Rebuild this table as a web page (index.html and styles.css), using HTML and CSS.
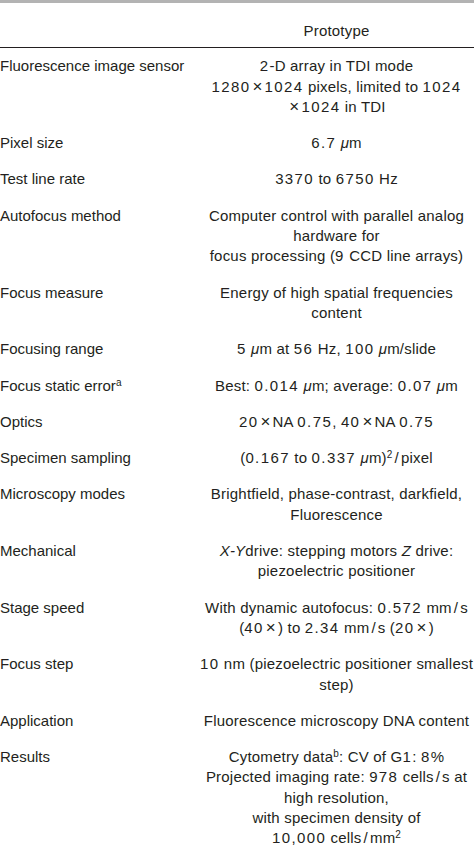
FILE: index.html
```html
<!DOCTYPE html>
<html lang="en">
<head>
<meta charset="utf-8">
<title>Prototype specifications</title>
<link rel="stylesheet" href="styles.css">
</head>
<body>
<div class="spec">
  <div class="row head">
    <div class="label"></div>
    <div class="value">Prototype</div>
  </div>
  <div class="row">
    <div class="label">Fluorescence image sensor</div>
    <div class="value"><span class="n">2</span>-D array in TDI mode<br><span class="n">1280</span><span class="x">×</span><span class="n">1024</span> pixels, limited to <span class="n">1024</span><br><span class="x">×</span><span class="n">1024</span> in TDI</div>
  </div>
  <div class="row">
    <div class="label">Pixel size</div>
    <div class="value"><span class="n">6.7</span> <i>μ</i>m</div>
  </div>
  <div class="row">
    <div class="label">Test line rate</div>
    <div class="value"><span class="n">3370</span> to <span class="n">6750</span> Hz</div>
  </div>
  <div class="row">
    <div class="label">Autofocus method</div>
    <div class="value">Computer control with parallel analog<br>hardware for<br>focus processing (<span class="n">9</span> CCD line arrays)</div>
  </div>
  <div class="row">
    <div class="label">Focus measure</div>
    <div class="value">Energy of high spatial frequencies<br>content</div>
  </div>
  <div class="row">
    <div class="label">Focusing range</div>
    <div class="value"><span class="n">5</span> <i>μ</i>m at <span class="n">56</span> Hz, <span class="n">100</span> <i>μ</i>m/slide</div>
  </div>
  <div class="row">
    <div class="label">Focus static error<sup>a</sup></div>
    <div class="value">Best: <span class="n">0.014</span> <i>μ</i>m; average: <span class="n">0.07</span> <i>μ</i>m</div>
  </div>
  <div class="row">
    <div class="label">Optics</div>
    <div class="value"><span class="n">20</span><span class="x">×</span>NA <span class="n">0.75</span>, <span class="n">40</span><span class="x">×</span>NA <span class="n">0.75</span></div>
  </div>
  <div class="row">
    <div class="label">Specimen sampling</div>
    <div class="value">(<span class="n">0.167</span> to <span class="n">0.337</span> <i>μ</i>m)<sup>2</sup><span class="sl">/</span>pixel</div>
  </div>
  <div class="row">
    <div class="label">Microscopy modes</div>
    <div class="value">Brightfield, phase-contrast, darkfield,<br>Fluorescence</div>
  </div>
  <div class="row">
    <div class="label">Mechanical</div>
    <div class="value"><i>X-Y</i>drive: stepping motors <i>Z</i> drive:<br>piezoelectric positioner</div>
  </div>
  <div class="row">
    <div class="label">Stage speed</div>
    <div class="value">With dynamic autofocus: <span class="n">0.572</span> mm<span class="sl">/</span>s<br>(<span class="n">40</span><span class="x">×</span>) to <span class="n">2.34</span> mm<span class="sl">/</span>s (<span class="n">20</span><span class="x">×</span>)</div>
  </div>
  <div class="row">
    <div class="label">Focus step</div>
    <div class="value"><span class="n">10</span> nm (piezoelectric positioner smallest<br>step)</div>
  </div>
  <div class="row">
    <div class="label">Application</div>
    <div class="value">Fluorescence microscopy DNA content</div>
  </div>
  <div class="row">
    <div class="label">Results</div>
    <div class="value">Cytometry data<sup>b</sup>: CV of G<span class="n">1</span>: <span class="n">8</span>%<br>Projected imaging rate: <span class="n">978</span> cells<span class="sl">/</span>s at<br>high resolution,<br>with specimen density of<br><span class="n">10,000</span> cells<span class="sl">/</span>mm<sup>2</sup></div>
  </div>
</div>
</body>
</html>
```
FILE: styles.css
```css
html, body {
  margin: 0;
  padding: 0;
  background: #ffffff;
  overflow: hidden;
}
body {
  font-family: "Liberation Sans", Arial, sans-serif;
  font-size: 15px;
  line-height: 20.3px;
  color: #231f20;
}
.spec {
  width: 474px;
  border-top: 3px solid #b3b3b3;
}
.row {
  display: grid;
  grid-template-columns: 199px 1fr;
  padding: 8px 0;
}
.head {
  padding: 18px 0 6px;
  border-bottom: 1px solid #231f20;
}
.label {
  white-space: nowrap;
}
.value {
  text-align: center;
  white-space: nowrap;
  letter-spacing: 0.2px;
}
.n {
  letter-spacing: 1.4px;
}
.x {
  font-size: 17px;
  line-height: 0;
  margin: 0 2px;
}
.sl {
  margin: 0 2px;
}
sup {
  font-size: 10px;
  line-height: 0;
  vertical-align: 5px;
}
i {
  font-style: italic;
}
```
